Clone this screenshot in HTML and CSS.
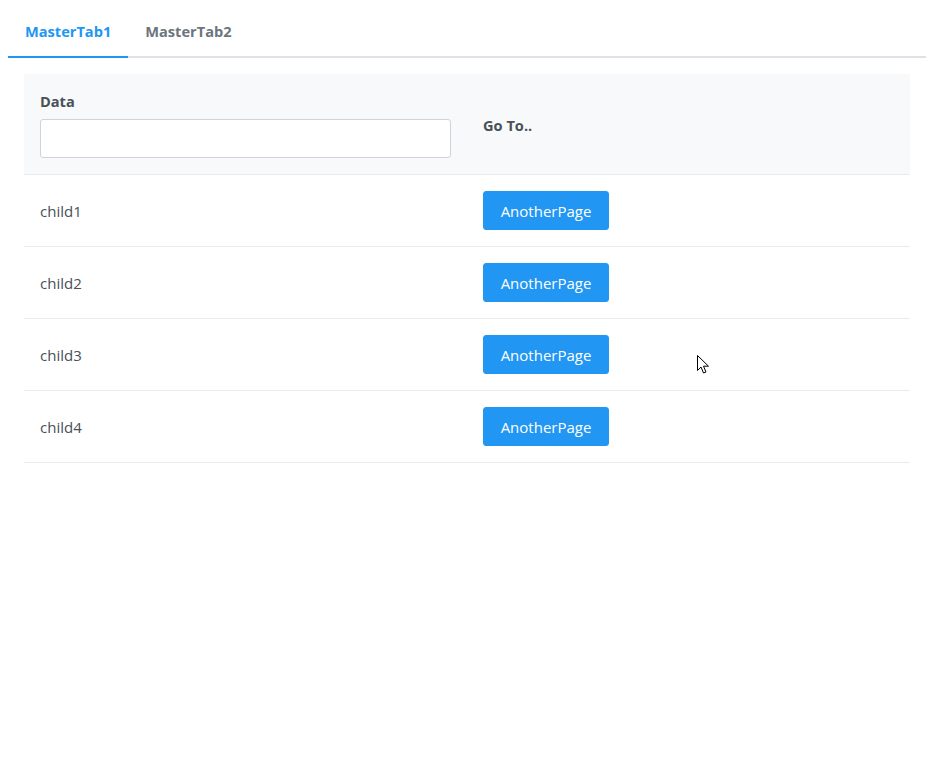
FILE: index.html
```html
<!DOCTYPE html>
<html>
<head>
<meta charset="utf-8">
<link rel="stylesheet" href="styles.css">
</head>
<body>
<div class="tabview">
  <ul class="tabnav">
    <li class="tab active">MasterTab1</li>
    <li class="tab">MasterTab2</li>
  </ul>
  <div class="panel">
    <table class="table">
      <thead>
        <tr>
          <th>
            <div class="th-label">Data</div>
            <input class="filter" type="text">
          </th>
          <th class="th-goto">Go To..</th>
        </tr>
      </thead>
      <tbody>
        <tr><td>child1</td><td><button class="btn">AnotherPage</button></td></tr>
        <tr><td>child2</td><td><button class="btn">AnotherPage</button></td></tr>
        <tr><td>child3</td><td><button class="btn">AnotherPage</button></td></tr>
        <tr><td>child4</td><td><button class="btn">AnotherPage</button></td></tr>
      </tbody>
    </table>
  </div>
</div>
<svg class="cursor" width="13" height="20" viewBox="0 0 13 20">
  <path d="M0.5 0.5 L0.5 15.5 L4 12 L6.5 18 L9 17 L6.5 11.2 L11.5 11.2 Z" fill="#fff" stroke="#000" stroke-width="1" stroke-linejoin="round"/>
</svg>
</body>
</html>
```
FILE: styles.css
```css
html, body {
  background: #ffffff;
}
body {
  margin: 8px;
  font-family: "Open Sans", "Noto Sans", sans-serif;
  font-size: 15px;
  color: #495057;
}
.tabnav {
  list-style: none;
  margin: 0;
  padding: 0;
  display: flex;
  border-bottom: 2px solid #dee2e6;
}
.tab {
  padding: 0 17px;
  height: 47px;
  line-height: 47px;
  padding-bottom: 1px;
  font-weight: 700;
  font-size: 14.6px;
  color: #6c757d;
  margin-bottom: -2px;
  border-bottom: 2px solid transparent;
}
.tab.active {
  color: #2196f3;
  border-bottom-color: #2196f3;
}
.panel {
  padding: 16px;
}
.table {
  width: 100%;
  border-collapse: collapse;
  table-layout: fixed;
}
.table th {
  background: #f8f9fa;
  text-align: left;
  font-weight: 700;
  font-size: 14.6px;
  padding: 16px;
  border-bottom: 1px solid #e9ecef;
  vertical-align: middle;
}
.table th.th-goto {
  padding-top: 18px;
}
.th-label {
  line-height: 22px;
  margin-top: 0;
  margin-bottom: 7px;
}
.filter {
  display: block;
  width: 100%;
  box-sizing: border-box;
  height: 39px;
  border: 1px solid #ced4da;
  border-radius: 3px;
  background: #fff;
  margin: 0;
}
.table td {
  padding: 16px;
  height: 39px;
  border-bottom: 1px solid #e9ecef;
  vertical-align: middle;
}
.btn {
  display: block;
  background: #2196f3;
  color: #ffffff;
  border: 1px solid #2196f3;
  border-radius: 3px;
  font-family: "Open Sans", "Noto Sans", sans-serif;
  font-size: 15px;
  height: 39px;
  width: 126px;
  padding: 0;
  margin: 0;
  text-align: center;
}
.cursor {
  position: absolute;
  left: 697px;
  top: 355px;
}
```
